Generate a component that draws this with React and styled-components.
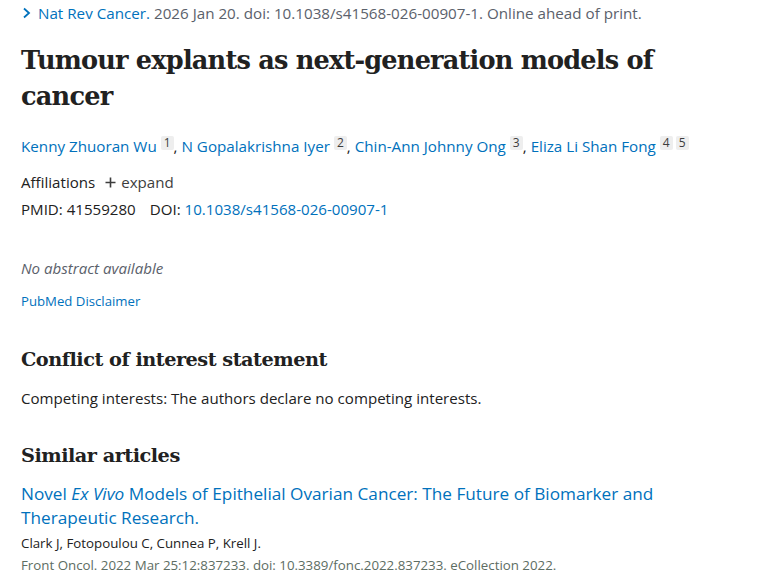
import styled, { createGlobalStyle } from "styled-components";

const GlobalStyle = createGlobalStyle`
  body {
    margin: 0;
    background: #ffffff;
    color: #212121;
    font-family: "Open Sans", "Noto Sans", sans-serif;
  }
`;

const Page = styled.main`
  padding: 2px 21px 0 21px;
  overflow: hidden;
  height: 570px;
  box-sizing: border-box;
`;

const Citation = styled.div`
  display: flex;
  align-items: center;
  gap: 6px;
  font-size: 15.2px;
  line-height: 20px;
  color: #5b616b;
  height: 22px;
  white-space: nowrap;
`;

const Chevron = styled.svg`
  width: 11px;
  height: 12px;
  flex: none;
`;

const Link = styled.a`
  color: #0071bc;
  text-decoration: none;
`;

const Title = styled.h1`
  margin: 18px 0 0;
  font-family: "DejaVu Serif", serif;
  font-weight: 700;
  font-size: 25.6px;
  line-height: 36px;
  letter-spacing: -0.8px;
  color: #212121;
`;

const Authors = styled.div`
  margin-top: 20px;
  font-size: 15.2px;
  line-height: 24px;
  color: #212121;
`;

const Sup = styled.span`
  display: inline-block;
  vertical-align: 5px;
  margin-left: 4px;
  padding: 0 3px;
  font-size: 12px;
  line-height: 14px;
  background: #eeeeee;
  color: #3d3d3d;
  border-radius: 2px;
  & + & {
    margin-left: 3px;
  }
`;

const MetaRow = styled.div`
  display: flex;
  align-items: center;
  gap: ${(p) => p.$gap || 0}px;
  margin-top: ${(p) => p.$top || 0}px;
  font-size: 15.1px;
  line-height: 24px;
  color: #212121;
`;

const Expand = styled.span`
  display: flex;
  align-items: center;
  gap: 5px;
  color: #3d3d3d;
`;

const NoAbstract = styled.p`
  margin: 35px 0 0;
  font-size: 15.1px;
  line-height: 24px;
  font-style: italic;
  color: #5b616b;
`;

const Disclaimer = styled(Link)`
  display: block;
  margin-top: 11px;
  font-size: 13.2px;
  line-height: 20px;
`;

const SectionTitle = styled.h2`
  margin: ${(p) => p.$top}px 0 0;
  font-family: "DejaVu Serif", serif;
  font-weight: 700;
  font-size: 19.3px;
  line-height: 28px;
  letter-spacing: -0.5px;
  color: #212121;
`;

const Body = styled.p`
  margin: 12px 0 0;
  font-size: 15.1px;
  line-height: 24px;
`;

const ArticleLink = styled(Link)`
  display: block;
  margin-top: 12px;
  font-size: 17.2px;
  line-height: 24px;
  em {
    font-style: italic;
  }
`;

const ArticleAuthors = styled.div`
  margin-top: 2px;
  font-size: 13.3px;
  line-height: 22px;
  color: #212121;
`;

const ArticleSource = styled.div`
  font-size: 13.3px;
  line-height: 22px;
  color: #5d6d63;
  white-space: nowrap;
`;

export default function App() {
  return (
    <>
      <GlobalStyle />
      <Page>
        <Citation>
          <Chevron viewBox="0 0 11 12">
            <path d="M3 1.5 L8 6 L3 10.5" fill="none" stroke="#0071bc" strokeWidth="1.8" />
          </Chevron>
          <span>
            <Link href="#">Nat Rev Cancer.</Link> 2026 Jan 20. doi:
            10.1038/s41568-026-00907-1. Online ahead of print.
          </span>
        </Citation>

        <Title>Tumour explants as next-generation models of cancer</Title>

        <Authors>
          <Link href="#">Kenny Zhuoran Wu</Link>
          <Sup>1</Sup>, <Link href="#">N Gopalakrishna Iyer</Link>
          <Sup>2</Sup>, <Link href="#">Chin-Ann Johnny Ong</Link>
          <Sup>3</Sup>, <Link href="#">Eliza Li Shan Fong</Link>
          <Sup>4</Sup>
          <Sup>5</Sup>
        </Authors>

        <MetaRow $top={12} $gap={10}>
          <span>Affiliations</span>
          <Expand>
            <svg width="11" height="11" viewBox="0 0 11 11">
              <path d="M5.5 0.5 V10.5 M0.5 5.5 H10.5" stroke="#3d3d3d" strokeWidth="1.6" />
            </svg>
            expand
          </Expand>
        </MetaRow>
        <MetaRow $top={3} $gap={14}>
          <span>PMID: 41559280</span>
          <span>
            DOI: <Link href="#">10.1038/s41568-026-00907-1</Link>
          </span>
        </MetaRow>

        <NoAbstract>No abstract available</NoAbstract>
        <Disclaimer href="#">PubMed Disclaimer</Disclaimer>

        <SectionTitle $top={35}>Conflict of interest statement</SectionTitle>
        <Body>Competing interests: The authors declare no competing interests.</Body>

        <SectionTitle $top={32}>Similar articles</SectionTitle>
        <ArticleLink href="#">
          Novel <em>Ex Vivo</em> Models of Epithelial Ovarian Cancer: The Future of
          Biomarker and Therapeutic Research.
        </ArticleLink>
        <ArticleAuthors>Clark J, Fotopoulou C, Cunnea P, Krell J.</ArticleAuthors>
        <ArticleSource>
          Front Oncol. 2022 Mar 25;12:837233. doi: 10.3389/fonc.2022.837233. eCollection 2022.
        </ArticleSource>
      </Page>
    </>
  );
}
